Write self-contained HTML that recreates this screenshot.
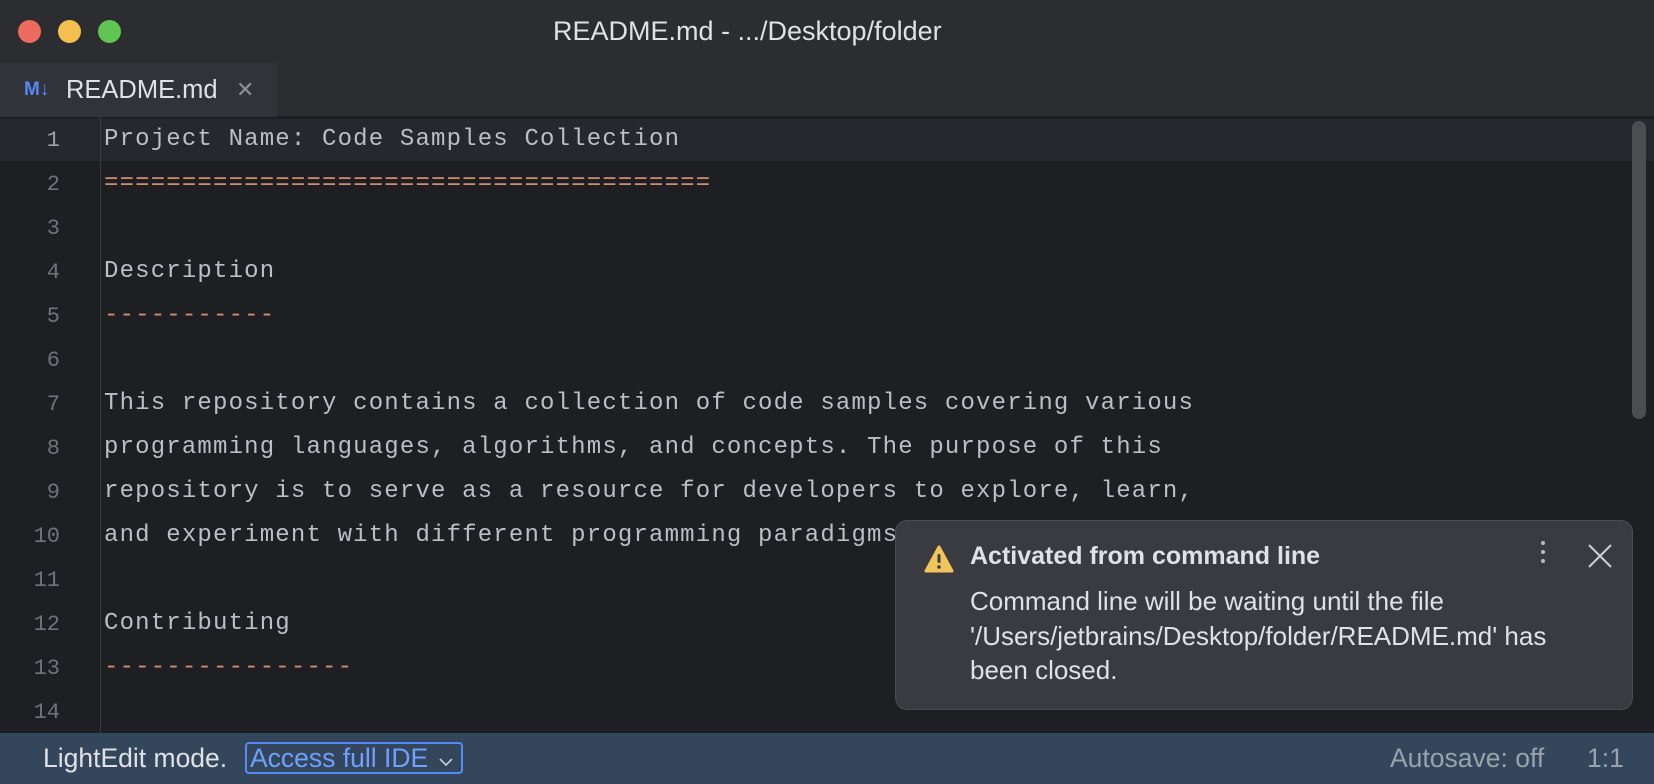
<!DOCTYPE html>
<html><head><style>
*{margin:0;padding:0;box-sizing:border-box}
body{width:1654px;height:784px;background:#1e1f22;overflow:hidden;position:relative;font-family:"Liberation Sans",sans-serif}
.title{position:absolute;left:0;top:0;width:1654px;height:63px;background:#2b2d30;color:#dfe1e5;font-size:27px;line-height:63px}
.dot{position:absolute;top:20px;width:23px;height:23px;border-radius:50%}
.tabrow{position:absolute;left:0;top:63px;width:1654px;height:54px;background:#2b2d30;border-bottom:1px solid #1e1f22}
.tab{position:absolute;left:0;top:0;width:277px;height:54px;background:#313338;color:#dfe1e5;font-size:25.5px;line-height:54px}
.hl{position:absolute;left:0;top:119px;width:1654px;height:42px;background:#26282e}
.gut{position:absolute;left:100px;top:117px;width:1px;height:616px;background:#393b40}
.ln{position:absolute;left:0;width:60px;text-align:right;color:#6f737a;font-family:"Liberation Mono",monospace;font-size:22px}
.code{position:absolute;left:104px;font-family:"Liberation Mono",monospace;font-size:24px;letter-spacing:1.17px;color:#bcbec4;white-space:pre}
.o{color:#cf8e6d}
.sb{position:absolute;left:1632px;top:121px;width:14px;height:298px;border-radius:7px;background:#4b4d51}
.note{position:absolute;left:895px;top:520px;width:738px;height:190px;background:#393b40;border:1px solid #4a4c52;border-radius:12px;color:#dfe1e5;font-size:26px}
.status{position:absolute;left:0;top:733px;width:1654px;height:51px;background:#34465b;color:#dfe1e5;font-size:26.5px}
</style></head><body>
<div class="title"><span style="position:absolute;left:553px;top:0">README.md - .../Desktop/folder</span>
<div class="dot" style="left:18px;background:#ec6a5e"></div>
<div class="dot" style="left:58px;background:#f4bf4f"></div>
<div class="dot" style="left:98px;background:#61c554"></div>
</div>
<div class="tabrow"><div class="tab"><span style="position:absolute;left:24px;color:#548af7;font-weight:bold;font-size:19px">M↓</span><span style="position:absolute;left:66px">README.md</span><span style="position:absolute;left:236px;color:#8c8f94;font-size:22px">✕</span></div></div>
<div class="hl"></div>
<div class="gut"></div>
<div class="sb"></div>
<div id="g"></div>
<script>
var lines=["Project Name: Code Samples Collection","<span class=o>=======================================</span>","","Description","<span class=o>-----------</span>","","This repository contains a collection of code samples covering various","programming languages, algorithms, and concepts. The purpose of this","repository is to serve as a resource for developers to explore, learn,","and experiment with different programming paradigms.","","Contributing","<span class=o>----------------</span>",""];
var h="";for(var i=0;i<14;i++){var y=126+i*44;h+='<div class="ln" style="top:'+(y+2)+'px;color:'+(i==0?'#a1a3ab':'#6f737a')+'">'+(i+1)+'</div><div class="code" style="top:'+y+'px">'+lines[i]+'</div>';}
document.getElementById("g").innerHTML=h;
</script>
<div class="note">
<svg style="position:absolute;left:28px;top:24px" width="30" height="28" viewBox="0 0 30 28"><path d="M15 2 L28 26 L2 26 Z" fill="#f2c55c" stroke="#f2c55c" stroke-width="3" stroke-linejoin="round"/><rect x="13.5" y="9" width="3" height="9" rx="1.5" fill="#393b40"/><circle cx="15" cy="22" r="1.8" fill="#393b40"/></svg>
<div style="position:absolute;left:74px;top:21px;font-weight:bold;font-size:25px">Activated from command line</div>
<div style="position:absolute;left:74px;top:63px;line-height:34.5px">Command line will be waiting until the file<br>'/Users/jetbrains/Desktop/folder/README.md' has<br>been closed.</div>
<div style="position:absolute;left:645px;top:20px;width:4px">
<div style="width:4px;height:4px;border-radius:2px;background:#bbb;margin-bottom:5px"></div><div style="width:4px;height:4px;border-radius:2px;background:#bbb;margin-bottom:5px"></div><div style="width:4px;height:4px;border-radius:2px;background:#bbb"></div></div>
<svg style="position:absolute;left:691px;top:22px" width="26" height="26"><path d="M2 2L24 24M24 2L2 24" stroke="#ced0d6" stroke-width="2"/></svg>
</div>
<div class="status">
<span style="position:absolute;left:43px;top:10px">LightEdit mode.</span>
<div style="position:absolute;left:245px;top:9px;width:218px;height:32px;border:2px solid #548af7;border-radius:4px;color:#6ea0ff;padding-left:3px;line-height:28px;white-space:nowrap">Access full IDE <svg width="16" height="10" style="margin-left:2px"><path d="M2 2L8 8L14 2" fill="none" stroke="#c0c4cc" stroke-width="1.8"/></svg></div>
<span style="position:absolute;left:1390px;top:10px;color:#9aa2ad">Autosave: off</span>
<span style="position:absolute;left:1587px;top:10px;color:#9aa2ad">1:1</span>
</div>
</body></html>
